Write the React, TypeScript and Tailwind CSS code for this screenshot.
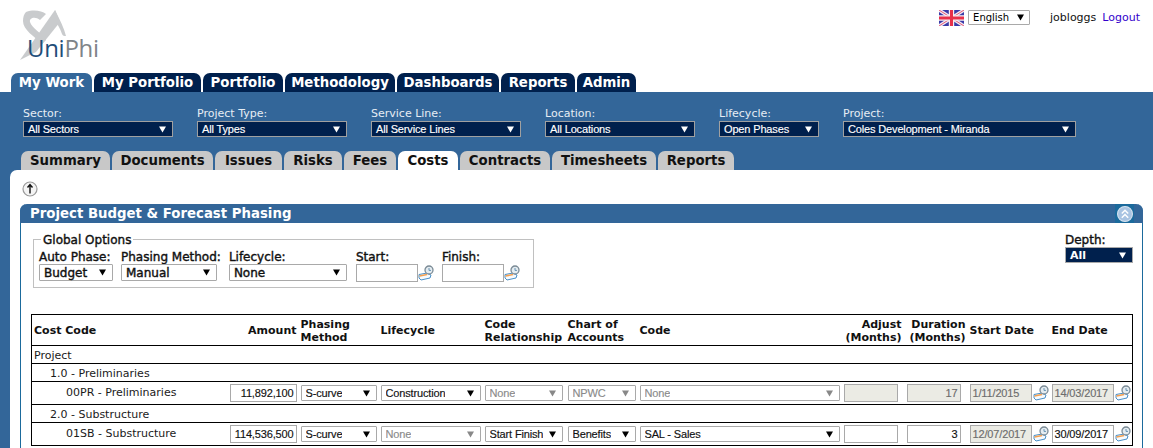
import { ReactNode } from "react";

const verdana = "font-['DejaVu_Sans',Verdana,sans-serif]";
// Arial at 11px with the hinted widths of the reference
const arial = "font-['Liberation_Sans',Arial,sans-serif] text-[11px] tracking-[-0.15px] [-webkit-text-stroke-width:0.15px]";
// labels in the options box sit between regular and bold in the reference
const midWeight = "text-[12px] [-webkit-text-stroke:0.4px_#111] text-[#111]";

const mainTabs = [
  { label: "My Work", w: "w-[81px]", active: true },
  { label: "My Portfolio", w: "w-[107px]" },
  { label: "Portfolio", w: "w-[80px]" },
  { label: "Methodology", w: "w-[110px]" },
  { label: "Dashboards", w: "w-[102px]" },
  { label: "Reports", w: "w-[74px]" },
  { label: "Admin", w: "w-[59px]" },
];

const subTabs = [
  { label: "Summary", w: "w-[89px]" },
  { label: "Documents", w: "w-[101px]" },
  { label: "Issues", w: "w-[67px]" },
  { label: "Risks", w: "w-[58px]" },
  { label: "Fees", w: "w-[52px]" },
  { label: "Costs", w: "w-[60px]", active: true },
  { label: "Contracts", w: "w-[90px]" },
  { label: "Timesheets", w: "w-[104px]" },
  { label: "Reports", w: "w-[76px]" },
];

const filters = [
  { label: "Sector:", value: "All Sectors", w: "w-[150px]" },
  { label: "Project Type:", value: "All Types", w: "w-[150px]" },
  { label: "Service Line:", value: "All Service Lines", w: "w-[150px]" },
  { label: "Location:", value: "All Locations", w: "w-[150px]" },
  { label: "Lifecycle:", value: "Open Phases", w: "w-[100px]" },
  { label: "Project:", value: "Coles Development - Miranda", w: "w-[233px]" },
];

function Arrow({ color = "#000" }: { color?: string }) {
  return (
    <svg width="7" height="7" viewBox="0 0 7 7" className="shrink-0">
      <path d="M0 0.5H7L3.5 6.5Z" fill={color} />
    </svg>
  );
}

// grey box select used through the phasing table
function Sel({ value, w, disabled }: { value: string; w: string; disabled?: boolean }) {
  return (
    <div
      className={`${w} ${arial} h-[16px] flex items-center justify-between pl-[4px] pr-[6px] border border-[#a9a9a9] rounded-[1px] bg-white leading-none ${disabled ? "text-[#8a8a8a]" : "text-[#111]"}`}
    >
      <span className="truncate">{value}</span>
      <Arrow color={disabled ? "#888" : "#000"} />
    </div>
  );
}

function DateIcon() {
  return (
    <svg width="16" height="16" viewBox="0 0 16 16" className="shrink-0">
      <path d="M1 9.5 9 8 13 10 12 13 3 15 1 13Z" fill="#f6fafd" stroke="#4a90c8" strokeWidth="1" />
      <path d="M1.5 11 9 9.5" stroke="#f5a050" strokeWidth="1.6" />
      <circle cx="11" cy="5" r="4" fill="#e4ecf1" stroke="#7a8a95" strokeWidth="1.3" />
      <path d="M11 3V5.4H13" fill="none" stroke="#4a7fa5" strokeWidth="0.8" />
    </svg>
  );
}

function DateField({ value, disabled, tight }: { value: string; disabled?: boolean; tight?: boolean }) {
  return (
    <div className={`flex items-center ${tight ? "" : "gap-[1px]"}`}>
      <div
        className={`${arial} w-[62px] h-[18px] flex items-center px-[2px] border border-[#a9a9a9] leading-none ${disabled ? "bg-[#ebebe4] text-[#6d6d6d]" : "bg-white text-[#111]"}`}
      >
        {value}
      </div>
      <DateIcon />
    </div>
  );
}

function NumBox({ value, w, disabled }: { value?: string; w: string; disabled?: boolean }) {
  return (
    <div
      className={`${w} ${arial} h-[18px] flex items-center justify-end px-[2px] border border-[#a9a9a9] leading-none ${disabled ? "bg-[#ebebe4] text-[#6d6d6d]" : "bg-white text-[#111]"}`}
    >
      {value}
    </div>
  );
}

function OptionField({ label, children }: { label: string; children: ReactNode }) {
  return (
    <div className="flex flex-col">
      <div className={`h-[13px] leading-[13px] whitespace-nowrap ${midWeight}`}>{label}</div>
      {children}
    </div>
  );
}

function BoldSel({ value, w }: { value: string; w: string }) {
  return (
    <div className={`${w} h-[17px] flex items-center justify-between pl-[4px] pr-[6px] border border-[#a9a9a9] rounded-[1px] bg-white leading-none ${midWeight}`}>
      <span>{value}</span>
      <Arrow />
    </div>
  );
}

function Logo() {
  return (
    <div className="relative w-[100px] h-[64px] ml-[14px]">
      <svg width="80" height="60" viewBox="0 0 80 60" className="absolute left-0 top-0">
        <path d="M6 54 41 4 46 16 22 46Z" fill="#c9cbcd" />
        <path d="M41 4C46 14 50 22 52 30 50 30 49 30 48 28 46 22 43 18 41 14Z" fill="#c9cbcd" />
        <path d="M12 6C20 3 28 5 32 8L26 14C21 10 15 12 16 16 18 22 26 26 32 34L28 38C20 30 9 24 9 15 9 11 10 8 12 6Z" fill="#c9cbcd" />
      </svg>
      <div className="absolute left-[13px] top-[26px] font-['Open_Sans',sans-serif] font-medium text-[24px] leading-[32px] tracking-[-0.3px]">
        <span className="text-[#1f4e79]">Uni</span>
        <span className="text-[#7f8488]">Phi</span>
      </div>
    </div>
  );
}

function Flag() {
  return (
    <svg width="25" height="16" viewBox="0 0 25 16" className="shrink-0">
      <rect width="25" height="16" fill="#3a3aa8" />
      <path d="M0 0 25 16M25 0 0 16" stroke="#f0eaf2" strokeWidth="3.4" />
      <path d="M0 0 25 16M25 0 0 16" stroke="#e85a78" strokeWidth="1" />
      <path d="M12.5 0V16M0 8H25" stroke="#f6eef2" strokeWidth="5.4" />
      <path d="M12.5 0V16M0 8H25" stroke="#e8304a" strokeWidth="3" />
    </svg>
  );
}

const cols = [196, 71, 80, 104, 83, 72, 204, 62, 64, 82, 83];

export default function App() {
  return (
    <div className={`${verdana} w-[1153px] h-[448px] overflow-hidden bg-[#336699]`}>
      <header className="bg-white h-[92px] flex flex-col justify-between">
        <div className="flex justify-between">
          <div className="pt-[6px]">
            <Logo />
          </div>
          <div className="flex items-start pt-[10px] pr-[13px] text-[11px] leading-[15px]">
            <Flag />
            <div className="w-[62px] h-[15px] ml-[4px] flex items-center justify-between pl-[4px] pr-[5px] border border-[#a9a9a9] rounded-[1px] text-[10px] leading-none text-black">
              English
              <Arrow />
            </div>
            <span className="ml-[20px] text-[#111]">jobloggs</span>
            <a className="ml-[6px] text-[#3300cc]">Logout</a>
          </div>
        </div>
        <nav className="flex gap-[2px] pl-[11px]">
          {mainTabs.map((t) => (
            <div
              key={t.label}
              className={`${t.w} h-[19px] rounded-t-[7px] text-center text-white text-[13.3px] font-bold leading-[19px] whitespace-nowrap ${t.active ? "bg-[#336699]" : "bg-[#00204d]"}`}
            >
              {t.label}
            </div>
          ))}
        </nav>
      </header>

      <div className="flex gap-[24px] pl-[23px] pt-[14px] h-[59px]">
        {filters.map((f) => (
          <div key={f.label} className={f.w}>
            <div className="h-[15px] text-[11px] leading-[15px] text-[#e6edf4]">{f.label}</div>
            <div className={`${arial} h-[16px] flex items-center justify-between pl-[4px] pr-[6px] pt-[1px] border border-[#a0a0a0] bg-[#00204d] text-white leading-none`}>
              <span>{f.value}</span>
              <Arrow color="#fff" />
            </div>
          </div>
        ))}
      </div>

      <div className="flex gap-[2px] pl-[21px] h-[19px]">
        {subTabs.map((t) => (
          <div
            key={t.label}
            className={`${t.w} rounded-t-[7px] text-center text-[13.3px] font-bold leading-[19px] text-[#111] whitespace-nowrap ${t.active ? "bg-white" : "bg-[#c8c8c8]"}`}
          >
            {t.label}
          </div>
        ))}
      </div>

      <main className="ml-[10px] bg-white rounded-tl-[7px] h-[278px] pl-[10px] pr-[10px]">
        <div className="h-[34px] pl-[2px] pt-[11px]">
          <svg width="16" height="16" viewBox="0 0 16 16">
            <circle cx="8" cy="8" r="7" fill="#f4f4f4" stroke="#9a9a9a" strokeWidth="1.2" />
            <path d="M8 12.5V4M5.5 6.5 8 3.5 10.5 6.5" fill="none" stroke="#111" strokeWidth="1.4" />
          </svg>
        </div>

        <section className="h-[244px] border-x border-[#1b6a9c] rounded-t-[7px]">
          <div className="-mx-px h-[19px] flex items-center justify-between bg-[#336699] rounded-t-[7px] pl-[10px]">
            <h2 className="text-[13.3px] font-bold text-white leading-[19px]">Project Budget &amp; Forecast Phasing</h2>
            <div className="w-[19px] h-[19px] mr-[9px] flex items-center justify-center bg-[#1b6a9c]">
              <svg width="16" height="16" viewBox="0 0 15 15">
                <circle cx="7.5" cy="7.5" r="7" fill="#a9c4e2" stroke="#d8e4f0" strokeWidth="1" />
                <path d="M4.5 7 7.5 4 10.5 7M4.5 11 7.5 8 10.5 11" fill="none" stroke="#fff" strokeWidth="1.4" />
              </svg>
            </div>
          </div>

          <div className="flex justify-between items-start pl-[12px] pr-[9px] pt-[9px] h-[91px]">
            <fieldset className="w-[501px] h-[56px] border border-[#c0c0c0] pl-[5px] pr-[5px]">
              <legend className={`ml-[2px] px-[2px] pt-[2px] leading-[13px] ${midWeight}`}>Global Options</legend>
              <div className="flex gap-[8px] pt-[4px]">
                <OptionField label="Auto Phase:">
                  <BoldSel value="Budget" w="w-[74px]" />
                </OptionField>
                <OptionField label="Phasing Method:">
                  <BoldSel value="Manual" w="w-[96px]" />
                </OptionField>
                <OptionField label="Lifecycle:">
                  <BoldSel value="None" w="w-[118px]" />
                </OptionField>
                <div className="ml-[1px]">
                  <OptionField label="Start:">
                    <DateField value="" tight />
                  </OptionField>
                </div>
                <OptionField label="Finish:">
                  <DateField value="" tight />
                </OptionField>
              </div>
            </fieldset>
            <div className="w-[68px] pt-[2px]">
              <div className={`h-[13px] leading-[13px] ${midWeight}`}>Depth:</div>
              <div className="h-[16px] flex items-center justify-between pl-[4px] pr-[6px] border border-[#a9a9a9] bg-[#00204d] text-white text-[11px] font-bold leading-none">
                All
                <Arrow color="#fff" />
              </div>
            </div>
          </div>

          <div className="pl-[10px]">
            <table className="table-fixed border-collapse w-[1102px] border border-black text-[11px] text-[#1a1a1a]">
              <colgroup>
                {cols.map((c, i) => (
                  <col key={i} width={c} />
                ))}
              </colgroup>
              <thead>
                <tr className="h-[31px] border-b border-black font-bold text-left text-[11px] leading-[13px] text-[#111]">
                  <th className="pl-[2px] pt-[1px]">Cost Code</th>
                  <th className="text-right pr-[2px] pt-[1px]">Amount</th>
                  <th className="pl-[2px] pt-[1px]">Phasing<br />Method</th>
                  <th className="pl-[2px] pt-[1px]">Lifecycle</th>
                  <th className="pl-[2px] pt-[1px] whitespace-nowrap">Code<br />Relationship</th>
                  <th className="pl-[2px] pt-[1px] whitespace-nowrap">Chart of<br />Accounts</th>
                  <th className="pl-[2px] pt-[1px]">Code</th>
                  <th className="text-right pr-[2px] pt-[1px] whitespace-nowrap">Adjust<br />(Months)</th>
                  <th className="text-right pr-[2px] pt-[1px] whitespace-nowrap">Duration<br />(Months)</th>
                  <th className="pl-[2px] pt-[1px] whitespace-nowrap">Start Date</th>
                  <th className="pl-[2px] pt-[1px] whitespace-nowrap">End Date</th>
                </tr>
              </thead>
              <tbody>
                <tr className="h-[18px] border-b border-black">
                  <td colSpan={11} className="pl-[2px] pt-[2px] leading-[15px]">Project</td>
                </tr>
                <tr className="h-[18px] border-b border-black">
                  <td colSpan={11} className="pl-[18px] pt-[2px] leading-[15px]">1.0 - Preliminaries</td>
                </tr>
                <tr className="h-[23px] border-b border-black">
                  <td className="pl-[34px] pt-[1px]">00PR - Preliminaries</td>
                  <td className="pl-[2px]"><NumBox value="11,892,100" w="w-[67px]" /></td>
                  <td className="pl-[2px]"><Sel value="S-curve" w="w-[76px]" /></td>
                  <td className="pl-[2px]"><Sel value="Construction" w="w-[100px]" /></td>
                  <td className="pl-[2px]"><Sel value="None" w="w-[78px]" disabled /></td>
                  <td className="pl-[2px]"><Sel value="NPWC" w="w-[68px]" disabled /></td>
                  <td className="pl-[2px]"><Sel value="None" w="w-[200px]" disabled /></td>
                  <td className="pl-[2px]"><NumBox w="w-[54px]" disabled /></td>
                  <td className="pl-[3px]"><NumBox value="17" w="w-[54px]" disabled /></td>
                  <td className="pl-[2px]"><DateField value="1/11/2015" disabled /></td>
                  <td className="pl-[2px]"><DateField value="14/03/2017" disabled /></td>
                </tr>
                <tr className="h-[18px] border-b border-black">
                  <td colSpan={11} className="pl-[18px] pt-[2px] leading-[15px]">2.0 - Substructure</td>
                </tr>
                <tr className="h-[23px] border-b border-black">
                  <td className="pl-[34px] pt-[1px]">01SB - Substructure</td>
                  <td className="pl-[2px]"><NumBox value="114,536,500" w="w-[67px]" /></td>
                  <td className="pl-[2px]"><Sel value="S-curve" w="w-[76px]" /></td>
                  <td className="pl-[2px]"><Sel value="None" w="w-[100px]" disabled /></td>
                  <td className="pl-[2px]"><Sel value="Start Finish" w="w-[78px]" /></td>
                  <td className="pl-[2px]"><Sel value="Benefits" w="w-[68px]" /></td>
                  <td className="pl-[2px]"><Sel value="SAL - Sales" w="w-[200px]" /></td>
                  <td className="pl-[2px]"><NumBox w="w-[54px]" /></td>
                  <td className="pl-[3px]"><NumBox value="3" w="w-[54px]" /></td>
                  <td className="pl-[2px]"><DateField value="12/07/2017" disabled /></td>
                  <td className="pl-[2px]"><DateField value="30/09/2017" /></td>
                </tr>
              </tbody>
            </table>
          </div>
        </section>
      </main>
    </div>
  );
}
